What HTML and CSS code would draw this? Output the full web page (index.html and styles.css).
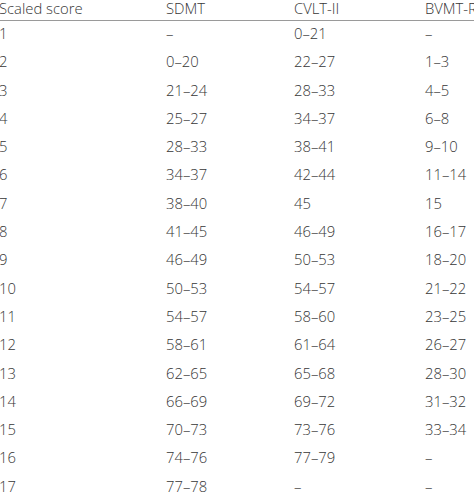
FILE: index.html
```html
<!DOCTYPE html>
<html>
<head>
<meta charset="utf-8">
<link rel="stylesheet" href="styles.css">
</head>
<body>
<div class="table">
  <div class="row head">
    <div class="cell">Scaled score</div><div class="cell">SDMT</div><div class="cell">CVLT-II</div><div class="cell">BVMT-R</div>
  </div>
  <div class="body">
    <div class="row"><div class="cell">1</div><div class="cell">–</div><div class="cell">0–21</div><div class="cell">–</div></div>
    <div class="row"><div class="cell">2</div><div class="cell">0–20</div><div class="cell">22–27</div><div class="cell">1–3</div></div>
    <div class="row"><div class="cell">3</div><div class="cell">21–24</div><div class="cell">28–33</div><div class="cell">4–5</div></div>
    <div class="row"><div class="cell">4</div><div class="cell">25–27</div><div class="cell">34–37</div><div class="cell">6–8</div></div>
    <div class="row"><div class="cell">5</div><div class="cell">28–33</div><div class="cell">38–41</div><div class="cell">9–10</div></div>
    <div class="row"><div class="cell">6</div><div class="cell">34–37</div><div class="cell">42–44</div><div class="cell">11–14</div></div>
    <div class="row"><div class="cell">7</div><div class="cell">38–40</div><div class="cell">45</div><div class="cell">15</div></div>
    <div class="row"><div class="cell">8</div><div class="cell">41–45</div><div class="cell">46–49</div><div class="cell">16–17</div></div>
    <div class="row"><div class="cell">9</div><div class="cell">46–49</div><div class="cell">50–53</div><div class="cell">18–20</div></div>
    <div class="row"><div class="cell">10</div><div class="cell">50–53</div><div class="cell">54–57</div><div class="cell">21–22</div></div>
    <div class="row"><div class="cell">11</div><div class="cell">54–57</div><div class="cell">58–60</div><div class="cell">23–25</div></div>
    <div class="row"><div class="cell">12</div><div class="cell">58–61</div><div class="cell">61–64</div><div class="cell">26–27</div></div>
    <div class="row"><div class="cell">13</div><div class="cell">62–65</div><div class="cell">65–68</div><div class="cell">28–30</div></div>
    <div class="row"><div class="cell">14</div><div class="cell">66–69</div><div class="cell">69–72</div><div class="cell">31–32</div></div>
    <div class="row"><div class="cell">15</div><div class="cell">70–73</div><div class="cell">73–76</div><div class="cell">33–34</div></div>
    <div class="row"><div class="cell">16</div><div class="cell">74–76</div><div class="cell">77–79</div><div class="cell">–</div></div>
    <div class="row"><div class="cell">17</div><div class="cell">77–78</div><div class="cell">–</div><div class="cell">–</div></div>
  </div>
</div>
</body>
</html>
```
FILE: styles.css
```css
html, body {
  margin: 0;
  padding: 0;
  background: #fff;
  overflow: hidden;
}
.table {
  width: 474px;
  height: 497px;
  overflow: hidden;
  font-family: "Open Sans", "Noto Sans", sans-serif;
  font-size: 14.8px;
  font-weight: 300;
  color: #363636;
}
.row {
  display: grid;
  grid-template-columns: 167px 128px 131px 60px;
  margin-left: -1px;
  white-space: nowrap;
  height: 28.3px;
  line-height: 28.3px;
}
.head {
  height: 20px;
  line-height: 16px;
  border-bottom: 1px solid #9a9a9a;
}
.body {
  margin-top: -2px;
}
```
